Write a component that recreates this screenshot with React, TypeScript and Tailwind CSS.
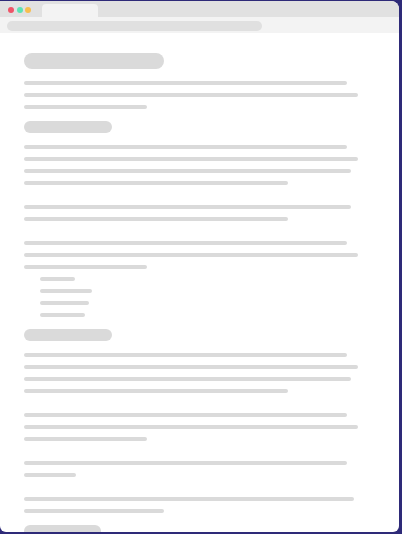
import React from 'react';

type Block =
  | { kind: 'title'; w: number }
  | { kind: 'heading'; w: number; gap: number }
  | { kind: 'para'; lines: number[]; gap: number }
  | { kind: 'list'; items: number[]; gap: number };

const BLOCKS: Block[] = [
  { kind: 'title', w: 140 },
  { kind: 'para', lines: [323, 334, 123], gap: 12 },
  { kind: 'heading', w: 88, gap: 12 },
  { kind: 'para', lines: [323, 334, 327, 264], gap: 12 },
  { kind: 'para', lines: [327, 264], gap: 20 },
  { kind: 'para', lines: [323, 334, 123], gap: 20 },
  { kind: 'list', items: [35, 52, 49, 45], gap: 8 },
  { kind: 'heading', w: 88, gap: 12 },
  { kind: 'para', lines: [323, 334, 327, 264], gap: 12 },
  { kind: 'para', lines: [323, 334, 123], gap: 20 },
  { kind: 'para', lines: [323, 52], gap: 20 },
  { kind: 'para', lines: [330, 140], gap: 20 },
  { kind: 'heading', w: 77, gap: 12 },
];

function Line({ w }: { w: number }) {
  return <div className="h-[4px] rounded-full bg-[#dadada]" style={{ width: w }} />;
}

export default function App() {
  return (
    <div className="w-[402px] h-[534px] bg-[#2e2a78] pt-px pr-[3px] pb-[2px] overflow-hidden">
      <div className="h-full bg-white rounded-tr-lg rounded-b-md overflow-hidden flex flex-col">
        {/* title bar */}
        <div className="h-[16px] bg-[#e1e1e1] flex items-end shrink-0">
          <div className="flex items-center gap-[2.5px] ml-[8px] self-center mt-[1px]">
            <span className="w-[6px] h-[6px] rounded-full bg-[#ee5468]" />
            <span className="w-[6px] h-[6px] rounded-full bg-[#5ce3b4]" />
            <span className="w-[6px] h-[6px] rounded-full bg-[#f7be4f]" />
          </div>
          <div className="ml-[11px] w-[56px] h-[13px] bg-[#f3f3f3] rounded-t-[4px]" />
        </div>
        {/* address bar */}
        <div className="h-[16px] bg-[#f3f3f3] shrink-0 flex items-center px-[7px]">
          <div className="w-[255px] h-[10px] rounded-full bg-[#e0e0e0] mt-[1px]" />
        </div>
        {/* page */}
        <div className="pt-[20px] px-[24px] flex flex-col">
          {BLOCKS.map((b, i) => {
            if (b.kind === 'title')
              return <div key={i} className="h-[16px] rounded-full bg-[#dadada]" style={{ width: b.w }} />;
            if (b.kind === 'heading')
              return (
                <div key={i} className="h-[12px] rounded-full bg-[#dadada] shrink-0" style={{ width: b.w, marginTop: b.gap }} />
              );
            if (b.kind === 'list')
              return (
                <div key={i} className="flex flex-col gap-[8px] pl-[16px]" style={{ marginTop: b.gap }}>
                  {b.items.map((w, j) => (
                    <Line key={j} w={w} />
                  ))}
                </div>
              );
            return (
              <div key={i} className="flex flex-col gap-[8px]" style={{ marginTop: b.gap }}>
                {b.lines.map((w, j) => (
                  <Line key={j} w={w} />
                ))}
              </div>
            );
          })}
        </div>
      </div>
    </div>
  );
}
